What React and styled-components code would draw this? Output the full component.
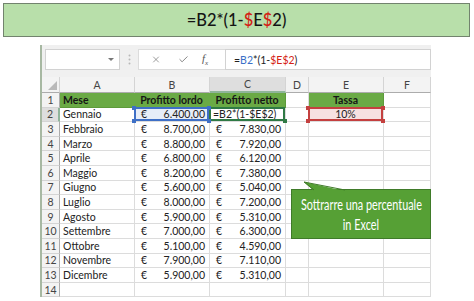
import React from 'react';
import styled, { createGlobalStyle, css } from 'styled-components';
import { X, Check } from 'lucide-react';

const Global = createGlobalStyle`
  html, body { margin: 0; padding: 0; background: #fff; }
  body { font-family: Lato, "Liberation Sans", sans-serif; width: 474px; height: 301px; overflow: hidden; }
  * { box-sizing: border-box; }
`;

const Page = styled.div`
  display: flex;
  flex-direction: column;
  align-items: flex-start;
  padding: 3px 4px 0 3px;
`;

const Banner = styled.div`
  align-self: stretch;
  height: 34px;
  border: 1px solid #72836e;
  background: #b8dfaa;
  display: flex;
  align-items: center;
  justify-content: center;
  font-family: Lato, "Liberation Sans", sans-serif;
  font-size: 16.5px;
  font-weight: 500;
  color: #141414;
`;

const Red = styled.span`
  color: ${(p) => p.$c || '#d52114'};
`;

const Window = styled.div`
  position: relative;
  margin: 8px 0 0 37px;
  width: 391px;
  border-left: 2px solid #a7b8a2;
`;

const Toolbar = styled.div`
  height: 32px;
  background: #f0f0f0;
  display: flex;
  align-items: flex-start;
  padding: 4px 0 0 3px;
`;

const NameBox = styled.div`
  width: 75px;
  height: 21px;
  background: #fff;
  border: 1px solid #d2d2d2;
  display: flex;
  align-items: center;
  justify-content: flex-end;
  padding-right: 5px;
`;

const Caret = styled.span`
  width: 0;
  height: 0;
  border-left: 3px solid transparent;
  border-right: 3px solid transparent;
  border-top: 3px solid #777;
`;

const Dots = styled.div`
  width: 18px;
  height: 21px;
  display: flex;
  align-items: center;
  justify-content: center;
`;

const IconZone = styled.div`
  width: 87px;
  height: 21px;
  background: #fff;
  border: 1px solid #dcdcdc;
  border-right: none;
  display: flex;
  align-items: center;
  padding-left: 12px;
  gap: 0;
  color: #5a5a5a;
`;

const IconSlot = styled.span`
  width: ${(p) => p.$w}px;
  display: flex;
  align-items: center;
  justify-content: center;
`;

const Fx = styled.span`
  font-family: "Liberation Serif", serif;
  font-style: italic;
  font-size: 11px;
  color: #555;
  sub { font-size: 7px; }
`;

const FormulaBox = styled.div`
  flex: 1;
  height: 21px;
  background: #fff;
  border: 1px solid #d2d2d2;
  display: flex;
  align-items: center;
  padding-left: 8px;
  font-size: 10.5px;
  color: #222;
`;

const Grid = styled.div`
  display: grid;
  grid-template-columns: 18px 75px 75px 76px 23px 75px 47px;
  grid-template-rows: 16px repeat(14, 14.6px);
  font-size: 10.5px;
  color: #222;
`;

const ColHead = styled.div`
  background: ${(p) => (p.$active ? '#dedede' : '#f3f3f3')};
  border-right: 1px solid #d4d4d4;
  border-bottom: ${(p) => (p.$active ? '2px solid #8fb59a' : '1px solid #acacac')};
  display: flex;
  align-items: center;
  justify-content: center;
  color: #444;
  position: relative;
`;

const CornerMark = styled.span`
  position: absolute;
  right: 2px;
  bottom: 2px;
  width: 0;
  height: 0;
  border-left: 9px solid transparent;
  border-bottom: 9px solid #b9b9b9;
`;

const RowNum = styled.div`
  background: ${(p) => (p.$active ? '#dedede' : '#f3f3f3')};
  border-right: ${(p) => (p.$active ? '2px solid #8fb59a' : '1px solid #acacac')};
  border-bottom: 1px solid #d4d4d4;
  display: flex;
  align-items: center;
  justify-content: center;
  color: #444;
`;

const selColors = {
  blue: { line: '#3e6fc6', fill: '#e6edf8' },
  green: { line: '#2f7a45', fill: '#fff' },
  red: { line: '#c4403f', fill: '#f6e1e1' },
};

const Cell = styled.div`
  position: relative;
  border-right: 1px solid #dcdcdc;
  border-bottom: 1px solid #dcdcdc;
  display: flex;
  align-items: center;
  justify-content: ${(p) => p.$align || 'flex-start'};
  padding: 0 4px 0 3px;
  white-space: nowrap;
  background: #fff;
  ${(p) =>
    p.$head &&
    css`
      background: #6aaa45;
      border-right-color: ${p.$joined ? '#6aaa45' : '#5d9a3b'};
      border-bottom-color: #5d9a3b;
      font-weight: 700;
      color: #161616;
    `}
  ${(p) =>
    p.$sel &&
    css`
      background: ${selColors[p.$sel].fill};
      &::after {
        content: '';
        position: absolute;
        inset: -1px 0 0 -1px;
        border: 2px solid ${selColors[p.$sel].line};
        pointer-events: none;
      }
    `}
`;

const Money = styled(Cell)`
  justify-content: space-between;
  padding: 0 4px 0 6px;
`;

const Handle = styled.span`
  position: absolute;
  width: 4px;
  height: 4px;
  z-index: 2;
  background: ${(p) => selColors[p.$c].line};
  ${(p) => (p.$v === 't' ? 'top: -2px;' : 'bottom: -2px;')}
  ${(p) => (p.$h === 'l' ? 'left: -3px;' : 'right: -2px;')}
`;

const Callout = styled.div`
  position: absolute;
  left: 249px;
  top: 144px;
  width: 140px;
  height: 50px;
  background: #56a035;
  border: 1px solid #3f7b29;
  display: flex;
  flex-direction: column;
  align-items: center;
  justify-content: center;
  color: #fff;
  z-index: 5;
`;

const Pointer = styled.svg`
  position: absolute;
  left: -1px;
  top: -9px;
`;

const CalloutLine = styled.span`
  display: block;
  font-family: Lato, "Liberation Sans", sans-serif;
  font-size: 15.5px;
  line-height: 20px;
  white-space: nowrap;
  transform: scaleX(0.7);
`;

const rows = [
  ['Febbraio', '8.700,00', '7.830,00'],
  ['Marzo', '8.800,00', '7.920,00'],
  ['Aprile', '6.800,00', '6.120,00'],
  ['Maggio', '8.200,00', '7.380,00'],
  ['Giugno', '5.600,00', '5.040,00'],
  ['Luglio', '8.000,00', '7.200,00'],
  ['Agosto', '5.900,00', '5.310,00'],
  ['Settembre', '7.000,00', '6.300,00'],
  ['Ottobre', '5.100,00', '4.590,00'],
  ['Novembre', '7.900,00', '7.110,00'],
  ['Dicembre', '5.900,00', '5.310,00'],
];

const Handles = ({ c, corners }) =>
  corners.map((k) => <Handle key={k} $c={c} $v={k[0]} $h={k[1]} />);

const Formula = () => (
  <>
    =<Red $c="#3b6fc7">B2</Red>*(1-<Red>$E$2</Red>)
  </>
);

export default function App() {
  return (
    <>
      <Global />
      <Page>
        <Banner>
          =B2*(1-<Red>$</Red>E<Red>$</Red>2)
        </Banner>
        <Window>
          <Toolbar>
            <NameBox>
              <Caret />
            </NameBox>
            <Dots>
              <svg width="3" height="11" viewBox="0 0 3 11">
                <circle cx="1.5" cy="1.5" r="1" fill="#b8b8b8" />
                <circle cx="1.5" cy="5.5" r="1" fill="#b8b8b8" />
                <circle cx="1.5" cy="9.5" r="1" fill="#b8b8b8" />
              </svg>
            </Dots>
            <IconZone>
              <IconSlot $w={10}>
                <X size={11} strokeWidth={1.4} />
              </IconSlot>
              <IconSlot $w={44}>
                <Check size={11} strokeWidth={1.6} />
              </IconSlot>
              <IconSlot $w={0}>
                <Fx>
                  f<sub>x</sub>
                </Fx>
              </IconSlot>
            </IconZone>
            <FormulaBox>
              <Formula />
            </FormulaBox>
          </Toolbar>
          <Grid>
            <ColHead>
              <CornerMark />
            </ColHead>
            <ColHead>A</ColHead>
            <ColHead>B</ColHead>
            <ColHead $active>C</ColHead>
            <ColHead>D</ColHead>
            <ColHead>E</ColHead>
            <ColHead>F</ColHead>

            <RowNum>1</RowNum>
            <Cell $head $joined>Mese</Cell>
            <Cell $head $joined $align="center">Profitto lordo</Cell>
            <Cell $head $align="center">Profitto netto</Cell>
            <Cell />
            <Cell $head $align="center">Tassa</Cell>
            <Cell />

            <RowNum $active>2</RowNum>
            <Cell>Gennaio</Cell>
            <Money $sel="blue">
              <span>€</span>
              <span>6.400,00</span>
              <Handles c="blue" corners={['tl', 'tr', 'bl', 'br']} />
            </Money>
            <Cell $sel="green" style={{ paddingLeft: 3 }}>
              <span>=B2*(1-$E$2)</span>
              <Handles c="green" corners={['br']} />
            </Cell>
            <Cell />
            <Cell $sel="red" $align="center">
              10%
              <Handles c="red" corners={['tl', 'tr', 'bl', 'br']} />
            </Cell>
            <Cell />

            {rows.map(([m, a, b], i) => (
              <React.Fragment key={m}>
                <RowNum>{i + 3}</RowNum>
                <Cell>{m}</Cell>
                <Money>
                  <span>€</span>
                  <span>{a}</span>
                </Money>
                <Money>
                  <span>€</span>
                  <span>{b}</span>
                </Money>
                <Cell />
                <Cell />
                <Cell />
              </React.Fragment>
            ))}

            <RowNum>14</RowNum>
            <Cell />
            <Cell />
            <Cell />
            <Cell />
            <Cell />
            <Cell />
          </Grid>
          <Callout>
            <Pointer width="60" height="10" viewBox="0 0 60 10">
              <path d="M23 10 L13 1 L54 10 Z" fill="#56a035" />
              <path d="M23 9 L13 1 L54 9" fill="none" stroke="#3f7b29" strokeWidth="1" />
            </Pointer>
            <CalloutLine>Sottrarre una percentuale</CalloutLine>
            <CalloutLine>in Excel</CalloutLine>
          </Callout>
        </Window>
      </Page>
    </>
  );
}
